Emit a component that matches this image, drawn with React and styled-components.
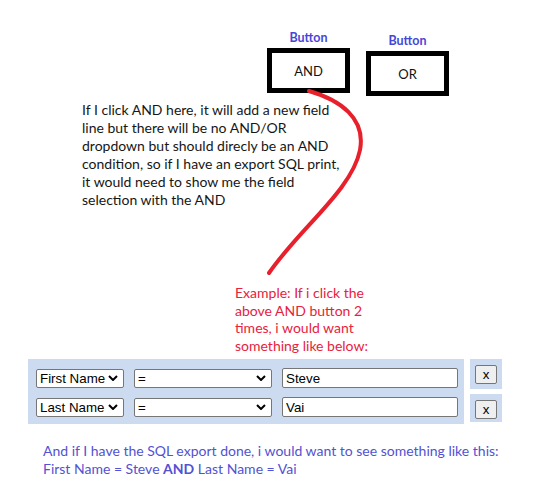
import React from 'react';
import styled, {createGlobalStyle} from 'styled-components';

const Global = createGlobalStyle`
    html, body {
        margin: 0;
        padding: 0;
        background: #ffffff;
    }
    body {
        font-family: Lato, "Open Sans", sans-serif;
    }
`

const chevron = "url(\"data:image/svg+xml,%3Csvg xmlns='http://www.w3.org/2000/svg' width='10' height='6' viewBox='0 0 10 6'%3E%3Cpath d='M1 1 L5 5 L9 1' fill='none' stroke='%23000' stroke-width='2'/%3E%3C/svg%3E\")";

const Page = styled.div`
    position: relative;
    width: 539px;
    height: 489px;
    padding-top: 30px;
    box-sizing: border-box;
    overflow: hidden;
`
const ButtonsRow = styled.div`
    display: flex;
    gap: 16px;
    padding-left: 267px;
`
const ButtonCol = styled.div`
    display: flex;
    flex-direction: column;
    align-items: center;
    width: 83px;
    margin-top: ${props => props.offset || 0}px;
`
const Caption = styled.div`
    font-family: Lato, sans-serif;
    font-weight: 700;
    font-size: 12.5px;
    line-height: 16px;
    color: #4646d8;
    margin-bottom: 2px;
`
const DrawnButton = styled.div`
    width: 100%;
    height: 45px;
    box-sizing: border-box;
    border: 5px solid #000;
    background: #fff;
    display: flex;
    align-items: center;
    justify-content: center;
    font-family: Lato, sans-serif;
    font-size: 13px;
    color: #111;
`
const Note = styled.p`
    margin: ${props => props.top}px 0 0 ${props => props.left}px;
    font-family: Lato, sans-serif;
    font-size: 14px;
    line-height: ${props => props.lh}px;
    color: ${props => props.color};
`
const FormArea = styled.div`
    display: flex;
    gap: 6px;
    margin: 5px 0 0 28px;
`
const Panel = styled.div`
    background: #cddbf1;
    padding: 9px 6px 7px 8px;
    display: flex;
    flex-direction: column;
    gap: 9px;
`
const Row = styled.div`
    display: flex;
    align-items: center;
    gap: 10px;
`
const Select = styled.select`
    appearance: none;
    -webkit-appearance: none;
    font-family: "Liberation Sans", Arial, sans-serif;
    font-size: 13.33px;
    height: 19px;
    width: ${props => props.w}px;
    padding: 0 0 0 3px;
    border: 1px solid #767676;
    border-radius: 2px;
    background: #fff ${chevron} no-repeat right 5px center;
    color: #000;
    box-sizing: border-box;
`
const TextInput = styled.input`
    font-family: "Liberation Sans", Arial, sans-serif;
    font-size: 13.33px;
    height: 20px;
    width: 176px;
    padding: 0 3px;
    border: 1px solid #767676;
    border-radius: 2px;
    box-sizing: border-box;
    color: #000;
`
const RemoveCol = styled.div`
    display: flex;
    flex-direction: column;
    gap: 5px;
`
const RemoveCell = styled.div`
    background: #cddbf1;
    width: 32px;
    height: ${props => props.h}px;
    display: flex;
    align-items: ${props => props.align};
    justify-content: center;
    box-sizing: border-box;
    padding: 6px 0 3px;
`
const RemoveButton = styled.button`
    font-family: "Liberation Sans", Arial, sans-serif;
    font-size: 13.33px;
    width: 22px;
    height: 19px;
    padding: 0;
    border: 1px solid #767676;
    border-radius: 2px;
    background: #efefef;
    color: #000;
`
const Bold = styled.b`
    font-weight: 700;
`
const Curve = styled.svg`
    position: absolute;
    left: 0;
    top: 0;
    pointer-events: none;
`

const rows = [
    {field: 'First Name', value: 'Steve'},
    {field: 'Last Name', value: 'Vai'},
];

export default function App() {
    return (
        <Page>
            <Global />
            <ButtonsRow>
                <ButtonCol>
                    <Caption>Button</Caption>
                    <DrawnButton>AND</DrawnButton>
                </ButtonCol>
                <ButtonCol offset={3}>
                    <Caption>Button</Caption>
                    <DrawnButton>OR</DrawnButton>
                </ButtonCol>
            </ButtonsRow>
            <Note top={5} left={82} lh={18} color="#161616">
                If I click AND here, it will add a new field<br/>
                line but there will be no AND/OR<br/>
                dropdown but should direcly be an AND<br/>
                condition, so if I have an export SQL print,<br/>
                it would need to show me the field<br/>
                selection with the AND
            </Note>
            <Note top={75} left={235} lh={17.5} color="#e8213c">
                Example: If i click the<br/>
                above AND button 2<br/>
                times, i would want<br/>
                something like below:
            </Note>
            <FormArea>
                <Panel>
                    {rows.map(r => (
                        <Row key={r.field}>
                            <Select w={88} defaultValue={r.field}>
                                <option>First Name</option>
                                <option>Last Name</option>
                            </Select>
                            <Select w={138} defaultValue="=">
                                <option>=</option>
                                <option>!=</option>
                            </Select>
                            <TextInput defaultValue={r.value} />
                        </Row>
                    ))}
                </Panel>
                <RemoveCol>
                    <RemoveCell h={30} align="flex-start"><RemoveButton>x</RemoveButton></RemoveCell>
                    <RemoveCell h={28} align="center"><RemoveButton>x</RemoveButton></RemoveCell>
                </RemoveCol>
            </FormArea>
            <Note top={18} left={43} lh={18} color="#5252d2">
                And if I have the SQL export done, i would want to see something like this:<br/>
                First Name = Steve <Bold>AND</Bold> Last Name = Vai
            </Note>
            <Curve width="539" height="489" viewBox="0 0 539 489">
                <path d="M309 91 C 340 100, 366 118, 360 150 C 352 190, 300 228, 269 273"
                      fill="none" stroke="#e8202c" strokeWidth="4" strokeLinecap="round" />
            </Curve>
        </Page>
    );
}
